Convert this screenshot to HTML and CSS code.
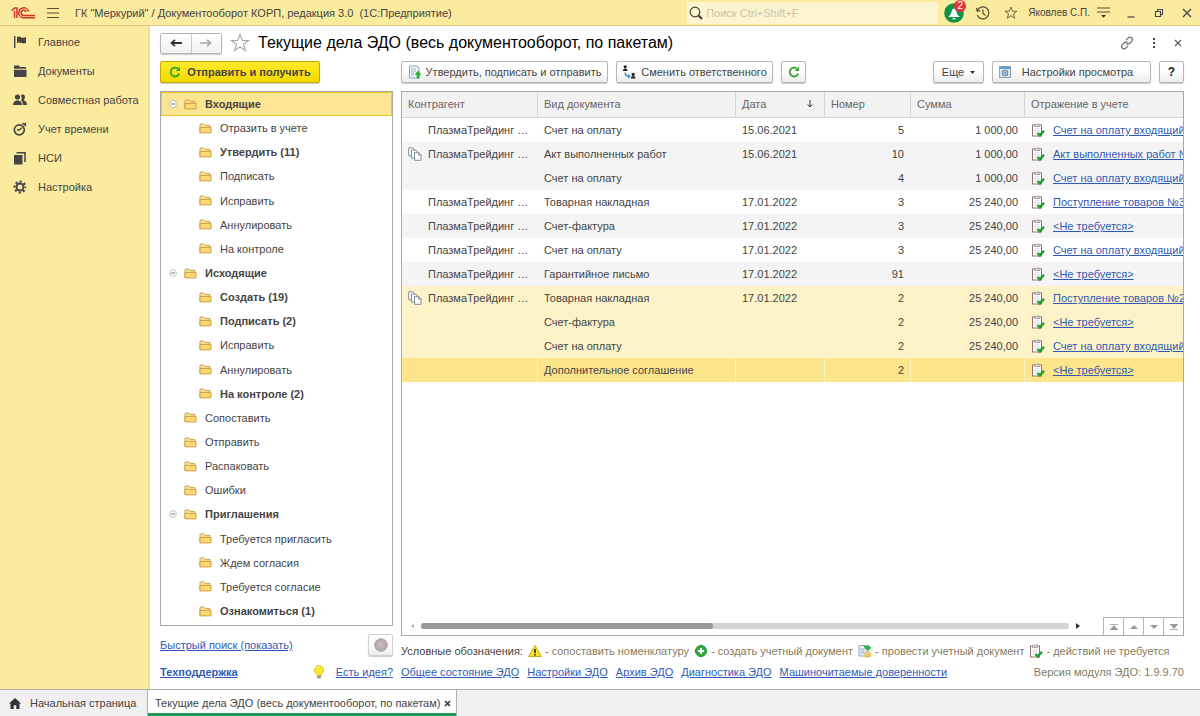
FILE: index.html
```html
<!DOCTYPE html>
<html lang="ru">

<head>
    <meta charset="UTF-8">
    <meta name="viewport" content="width=device-width, initial-scale=1.0">
    <title>Текущие дела ЭДО</title>

    <link rel="stylesheet" href="styles.css">
</head>

<body>
    <!-- общие иконки -->
    <svg class="sprite">
        <symbol id="i-folder" viewBox="0 0 14 12">
            <path d="M1 10.5V2.2Q1 1 2.2 1H5l1.4 1.6h5.4v2" fill="#fbe39a" stroke="#c79a3c" />
            <path d="M1 10.8V4.8h12v6z" fill="#fcd873" stroke="#c79a3c" stroke-linejoin="round" />
        </symbol>
        <symbol id="i-clip" viewBox="0 0 14 14">
            <rect x="1.5" y="2" width="9" height="11" fill="#fff" stroke="#9c6f6b" />
            <path d="M3.5 3.5V1.2h5v2.3z" fill="#d9d9dc" stroke="#999" stroke-width=".8" />
            <path d="M3.5 6h5M3.5 8h5M3.5 10h3" stroke="#c9ccd4" stroke-width=".8" />
            <path d="M6.5 10l2.3 2.4L13 7.8" fill="none" stroke="#1e9a2a" stroke-width="2.4" />
        </symbol>
        <symbol id="i-copies" viewBox="0 0 14 14">
            <g fill="#fff" stroke="#7f8d9b">
                <path d="M.8.8h4l2 2v6h-6z" />
                <path d="M3.6 3h4l2 2v6h-6z" />
                <path d="M6.5 5.3h4l2.5 2.5v5.5H6.5z" />
                <path d="M10.3 5.5v2.6H13" fill="none" />
            </g>
        </symbol>
        <symbol id="i-refresh" viewBox="0 0 12 12">
            <path d="M10.2 7.6A4.4 4.4 0 1 1 8.8 2.6" fill="none" stroke="#2ca52c" stroke-width="1.8" />
            <path d="M6.8 4.9L11 5V.8z" fill="#2ca52c" />
        </symbol>
        <symbol id="i-star" viewBox="0 0 20 20">
            <path d="M10 1.5l2.3 6h6.2l-5 3.8 1.9 6.2-5.4-3.7-5.4 3.7 1.9-6.2-5-3.8h6.2z" fill="none" stroke="currentColor" stroke-width="1.2" />
        </symbol>
        <symbol id="i-minus" viewBox="0 0 8 8">
            <circle cx="4" cy="4" r="3.4" fill="#fff" stroke="#b3b3b3" stroke-width=".8" />
            <path d="M2 4h4" stroke="#777" />
        </symbol>
    </svg>

    <header class="topbar">
        <svg class="logo" viewBox="0 0 26 14">
            <g fill="none" stroke="#d8332b" stroke-width="1.6">
                <path d="M.8 4.6L3.8 1.7h2.4V12.3M3.7 4.8V12.3" />
                <path d="M18.2 5.4A5.2 5.2 0 1 0 13.2 12H25" />
                <path d="M15.7 5.9A2.7 2.7 0 1 0 13.2 9.5H25" />
            </g>
        </svg>
        <button class="icon-btn" aria-label="Меню">
            <svg width="12" height="12" viewBox="0 0 12 12">
                <path d="M0 1.5h12M0 6h12M0 10.5h12" stroke="#55502f" stroke-width="1.1" />
            </svg>
        </button>
        <span class="app-title">ГК "Меркурий" / Документооборот КОРП, редакция 3.0&nbsp; (1С:Предприятие)</span>
        <label class="search">
            <svg width="14" height="14" viewBox="0 0 14 14">
                <circle cx="6" cy="6" r="4.8" fill="none" stroke="#444" stroke-width="1.2" />
                <path d="M9.5 9.5L13 13" stroke="#333" stroke-width="1.8" />
            </svg>
            <input type="text" placeholder="Поиск Ctrl+Shift+F" aria-label="Поиск">
        </label>
        <button class="icon-btn bell" aria-label="Уведомления">
            <svg width="20" height="20" viewBox="0 0 20 20">
                <circle cx="10" cy="10" r="9.8" fill="#0f9347" />
                <path d="M4 14q3-1.5 3.5-5 .6-3.500 2.500-3.500t2.500 3.500q.5 3.500 3.500 5z" fill="#fff" />
                <path d="M8.200 15h3.600q-.5 1.500-1.800 1.500T8.200 15z" fill="#fff" />
            </svg>
            <span class="count">2</span>
        </button>
        <button class="icon-btn history" aria-label="История">
            <svg width="14" height="14" viewBox="0 0 14 14">
                <path d="M1.2 4.8A6 6 0 1 1 1.2 9" fill="none" stroke="#55502f" stroke-width="1.2" />
                <path d="M.5 2l.7 3.2 3-.5M7 3.500V7.500l2.500 2" fill="none" stroke="#55502f" stroke-width="1.2" />
            </svg>
        </button>
        <button class="icon-btn fav" aria-label="Избранное"><svg width="14" height="14"><use href="#i-star" /></svg></button>
        <a class="user" href="#">Яковлев С.П.</a>
        <button class="icon-btn service" aria-label="Сервис">
            <svg width="13" height="11" viewBox="0 0 13 11">
                <path d="M0 1h13M0 5h13" stroke="#55502f" stroke-width="1.2" />
                <path d="M4 8h5l-2.500 2.800z" fill="#33301c" />
            </svg>
        </button>
        <div class="win-btns">
            <button class="icon-btn" aria-label="Свернуть">
                <svg width="10" height="10" viewBox="0 0 10 10"><path d="M1.5 9h7" stroke="#444" stroke-width="1.2" /></svg>
            </button>
            <button class="icon-btn" aria-label="Развернуть">
                <svg width="10" height="10" viewBox="0 0 10 10">
                    <path d="M1.5 3.5h5v5h-5zM3.5 3.500v-2h5v5h-2" fill="none" stroke="#444" stroke-width="1.1" />
                </svg>
            </button>
            <button class="icon-btn" aria-label="Закрыть">
                <svg width="10" height="10" viewBox="0 0 10 10"><path d="M1 1l8 8M9 1L1 9" stroke="#444" stroke-width="1.2" /></svg>
            </button>
        </div>
    </header>

    <div class="main">
        <nav class="sidebar">
            <a href="#">
                <svg viewBox="0 0 14 14" fill="#454545">
                    <path d="M1 1h1.400v12H1zM4 2q2-.9 4 .2t5-.2v6q-2 .9-4.500 0T4 8z" />
                </svg>Главное</a>
            <a href="#">
                <svg viewBox="0 0 14 14" fill="#454545">
                    <path d="M1 1.500h5l1 1.500h6v1.800H1zM1 5.800h12.500V13H1z" />
                </svg>Документы</a>
            <a href="#">
                <svg viewBox="0 0 14 14" fill="#454545">
                    <circle cx="4.500" cy="4" r="2.600" />
                    <path d="M0 12q0-3.500 3.200-4.500h2.500Q9 8.500 9 12zM8 1.800q3.500-1 4 1.700 0 2-1 3.200.3 1 1.500 1.500 1.500.8 1.500 3.800h-4q0-3-1.800-4.500l.6-1.500z" />
                </svg>Совместная работа</a>
            <a href="#">
                <svg viewBox="0 0 14 14" fill="none" stroke="#454545">
                    <circle cx="6.300" cy="7.800" r="5" stroke-width="1.700" />
                    <path d="M6.300 8l3-2.500M6.300 8H4" stroke-width="1.300" />
                    <path d="M9.500 1.200l3.500 2.600M12.800 1l-1.600 2" stroke-width="1.600" />
                </svg>Учет времени</a>
            <a href="#">
                <svg viewBox="0 0 14 14" fill="#454545">
                    <path d="M1 4h8.500v9.500H1z" />
                    <path d="M3.500 1.800h8.500V11" fill="none" stroke="#454545" stroke-width="1.500" />
                </svg>НСИ</a>
            <a href="#">
                <svg viewBox="0 0 14 14" fill="none" stroke="#454545">
                    <circle cx="7" cy="7" r="3.500" stroke-width="2" />
                    <circle cx="7" cy="7" r="5.500" stroke-width="2" stroke-dasharray="2.160" stroke-dashoffset="1.080" />
                </svg>Настройка</a>
        </nav>

        <main class="content">
            <div class="page-head">
                <div class="nav-btns">
                    <button aria-label="Назад">
                        <svg width="12" height="8" viewBox="0 0 12 8"><path d="M12 4H2M5 .8L1.500 4 5 7.200" fill="none" stroke="#333" stroke-width="1.800" /></svg>
                    </button>
                    <button aria-label="Вперед">
                        <svg width="12" height="8" viewBox="0 0 12 8"><path d="M0 4h10M7 .8L10.500 4 7 7.200" fill="none" stroke="#aaa" stroke-width="1.600" /></svg>
                    </button>
                </div>
                <svg class="title-star"><use href="#i-star" /></svg>
                <h1>Текущие дела ЭДО (весь документооборот, по пакетам)</h1>
                <div class="page-tools">
                    <button class="icon-btn" aria-label="Ссылка">
                        <svg width="14" height="14" viewBox="0 0 14 14">
                            <g fill="none" stroke="#666" stroke-width="1.200">
                                <path d="M6 4.200L8.500 1.700q1.700-1.400 3.200.2t.2 3.200L9.500 7.500q-1.600 1.300-3 0" />
                                <path d="M8 9.800l-2.500 2.500q-1.700 1.400-3.200-.2t-.2-3.200L4.500 6.500q1.600-1.300 3 0" />
                            </g>
                        </svg>
                    </button>
                    <button class="icon-btn" aria-label="Еще действия">
                        <svg width="4" height="10" viewBox="0 0 4 10" fill="#444">
                            <path d="M1 0h2v2H1zM1 4h2v2H1zM1 8h2v2H1z" />
                        </svg>
                    </button>
                    <button class="icon-btn" aria-label="Закрыть форму">
                        <svg width="8" height="8" viewBox="0 0 8 8"><path d="M1 1l6 6M7 1L1 7" stroke="#555" stroke-width="1.100" /></svg>
                    </button>
                </div>
            </div>

            <div class="workspace">
                <section class="left">
                    <div class="toolbar">
                        <button class="btn primary"><svg width="12" height="12"><use href="#i-refresh" /></svg>Отправить и получить</button>
                    </div>

                    <ul class="tree">
                        <li class="group active"><svg class="toggle"><use href="#i-minus" /></svg><svg class="folder"><use href="#i-folder" /></svg>Входящие</li>
                        <li class="sub"><svg class="folder"><use href="#i-folder" /></svg>Отразить в учете</li>
                        <li class="sub bold"><svg class="folder"><use href="#i-folder" /></svg>Утвердить (11)</li>
                        <li class="sub"><svg class="folder"><use href="#i-folder" /></svg>Подписать</li>
                        <li class="sub"><svg class="folder"><use href="#i-folder" /></svg>Исправить</li>
                        <li class="sub"><svg class="folder"><use href="#i-folder" /></svg>Аннулировать</li>
                        <li class="sub"><svg class="folder"><use href="#i-folder" /></svg>На контроле</li>
                        <li class="group"><svg class="toggle"><use href="#i-minus" /></svg><svg class="folder"><use href="#i-folder" /></svg>Исходящие</li>
                        <li class="sub bold"><svg class="folder"><use href="#i-folder" /></svg>Создать (19)</li>
                        <li class="sub bold"><svg class="folder"><use href="#i-folder" /></svg>Подписать (2)</li>
                        <li class="sub"><svg class="folder"><use href="#i-folder" /></svg>Исправить</li>
                        <li class="sub"><svg class="folder"><use href="#i-folder" /></svg>Аннулировать</li>
                        <li class="sub bold"><svg class="folder"><use href="#i-folder" /></svg>На контроле (2)</li>
                        <li class="item"><svg class="folder"><use href="#i-folder" /></svg>Сопоставить</li>
                        <li class="item"><svg class="folder"><use href="#i-folder" /></svg>Отправить</li>
                        <li class="item"><svg class="folder"><use href="#i-folder" /></svg>Распаковать</li>
                        <li class="item"><svg class="folder"><use href="#i-folder" /></svg>Ошибки</li>
                        <li class="group"><svg class="toggle"><use href="#i-minus" /></svg><svg class="folder"><use href="#i-folder" /></svg>Приглашения</li>
                        <li class="sub"><svg class="folder"><use href="#i-folder" /></svg>Требуется пригласить</li>
                        <li class="sub"><svg class="folder"><use href="#i-folder" /></svg>Ждем согласия</li>
                        <li class="sub"><svg class="folder"><use href="#i-folder" /></svg>Требуется согласие</li>
                        <li class="sub bold"><svg class="folder"><use href="#i-folder" /></svg>Ознакомиться (1)</li>
                    </ul>

                    <div class="quick">
                        <a href="#">Быстрый поиск (показать)</a>
                        <button class="btn round" aria-label="Очистить">
                            <svg width="14" height="14" viewBox="0 0 14 14">
                                <circle cx="7" cy="7" r="6.300" fill="#bcaeae" stroke="#a9a0a0" />
                                <path d="M4.800 4.800l4.400 4.400M9.200 4.800L4.800 9.200" stroke="#cbbfbf" stroke-width="1.500" />
                            </svg>
                        </button>
                    </div>
                    <div class="support">
                        <a class="bold" href="#">Техподдержка</a>
                        <svg width="12" height="14" viewBox="0 0 12 14">
                            <path d="M6 .5a4.600 4.600 0 0 1 2.700 8.300L8 10.500H4L3.300 8.800A4.600 4.600 0 0 1 6 .5z" fill="#fbe82a" stroke="#d8b920" stroke-width=".8" />
                            <path d="M4 3.500q.8-1.300 2.200-1.300" stroke="#fff" fill="none" />
                            <path d="M4 10.700h4v1.800l-1 1H5l-1-1z" fill="#999" />
                        </svg>
                        <a href="#">Есть идея?</a>
                    </div>
                </section>

                <section class="right">
                    <div class="toolbar">
                        <button class="btn approve">
                            <svg width="14" height="14" viewBox="0 0 14 14">
                                <path d="M1.500 1h7.500l2 2v10H1.500z" fill="#f3f7fb" stroke="#8ba0b5" />
                                <path d="M3 4h5M3 6h5M3 8h3M3 10h3" stroke="#9fb3c8" />
                                <path d="M8.600 13.500V9.800H6.500L10 5.800l3.600 4h-2.200v3.700z" fill="#2cb52f" />
                            </svg>Утвердить, подписать и отправить</button>
                        <button class="btn change">
                            <svg width="14" height="14" viewBox="0 0 14 14">
                                <circle cx="3.200" cy="1.800" r="1.600" fill="#222" />
                                <path d="M.8 6q0-2.500 2.400-2.500T5.600 6zM8.800 13.500q0-2.500 2.400-2.500t2.400 2.500z" fill="#222" />
                                <circle cx="11.200" cy="9.400" r="1.600" fill="#222" />
                                <path d="M3.200 7.500q0 3.800 4 4" fill="none" stroke="#3f8fd8" stroke-width="1.500" />
                                <path d="M6 9l3 2.500-3 2z" fill="#3f8fd8" />
                            </svg>Сменить ответственного</button>
                        <button class="btn round" aria-label="Обновить"><svg width="12" height="12"><use href="#i-refresh" /></svg></button>
                        <div class="spacer"></div>
                        <button class="btn more">Еще
                            <svg width="5" height="3" viewBox="0 0 5 3"><path d="M0 0h5L2.500 3z" fill="#333" /></svg>
                        </button>
                        <button class="btn view">
                            <svg width="12" height="12" viewBox="0 0 12 12">
                                <rect x=".5" y=".5" width="11" height="11" fill="#dfe9f2" stroke="#8aa0b5" />
                                <path d="M1 1h10v2H1z" fill="#5a9bd5" />
                                <circle cx="6" cy="7" r="2.600" fill="none" stroke="#6f88a3" stroke-width="1.400" />
                                <circle cx="6" cy="7" r="1" fill="#4f86bd" />
                            </svg>
                            <span>Настройки просмотра</span></button>
                        <button class="btn help">?</button>
                    </div>

                    <div class="grid-box">
                        <table>
                            <colgroup>
                                <col class="c-org">
                                <col class="c-kind">
                                <col class="c-date">
                                <col class="c-num">
                                <col class="c-sum">
                                <col>
                            </colgroup>
                            <thead>
                                <tr>
                                    <th>Контрагент</th>
                                    <th>Вид документа</th>
                                    <th><div class="sorted">Дата
                                        <svg width="6" height="8" viewBox="0 0 6 8"><path d="M3 0v6.500M.8 4.500L3 7l2.200-2.500" fill="none" stroke="#333" /></svg></div></th>
                                    <th>Номер</th>
                                    <th>Сумма</th>
                                    <th>Отражение в учете</th>
                                </tr>
                            </thead>
                            <tbody>
                                <tr>
                                    <td class="org">ПлазмаТрейдинг …</td>
                                    <td>Счет на оплату</td>
                                    <td>15.06.2021</td>
                                    <td class="num">5</td>
                                    <td class="num">1 000,00</td>
                                    <td><svg class="clip"><use href="#i-clip" /></svg><a href="#">Счет на оплату входящий</a></td>
                                </tr>
                                <tr class="even">
                                    <td class="org"><svg class="copies"><use href="#i-copies" /></svg>ПлазмаТрейдинг …</td>
                                    <td>Акт выполненных работ</td>
                                    <td>15.06.2021</td>
                                    <td class="num">10</td>
                                    <td class="num">1 000,00</td>
                                    <td><svg class="clip"><use href="#i-clip" /></svg><a href="#">Акт выполненных работ №</a></td>
                                </tr>
                                <tr class="even">
                                    <td></td>
                                    <td>Счет на оплату</td>
                                    <td></td>
                                    <td class="num">4</td>
                                    <td class="num">1 000,00</td>
                                    <td><svg class="clip"><use href="#i-clip" /></svg><a href="#">Счет на оплату входящий</a></td>
                                </tr>
                                <tr>
                                    <td class="org">ПлазмаТрейдинг …</td>
                                    <td>Товарная накладная</td>
                                    <td>17.01.2022</td>
                                    <td class="num">3</td>
                                    <td class="num">25 240,00</td>
                                    <td><svg class="clip"><use href="#i-clip" /></svg><a href="#">Поступление товаров №3</a></td>
                                </tr>
                                <tr class="even">
                                    <td class="org">ПлазмаТрейдинг …</td>
                                    <td>Счет-фактура</td>
                                    <td>17.01.2022</td>
                                    <td class="num">3</td>
                                    <td class="num">25 240,00</td>
                                    <td><svg class="clip"><use href="#i-clip" /></svg><a href="#">&lt;Не требуется&gt;</a></td>
                                </tr>
                                <tr>
                                    <td class="org">ПлазмаТрейдинг …</td>
                                    <td>Счет на оплату</td>
                                    <td>17.01.2022</td>
                                    <td class="num">3</td>
                                    <td class="num">25 240,00</td>
                                    <td><svg class="clip"><use href="#i-clip" /></svg><a href="#">Счет на оплату входящий</a></td>
                                </tr>
                                <tr class="even">
                                    <td class="org">ПлазмаТрейдинг …</td>
                                    <td>Гарантийное письмо</td>
                                    <td>17.01.2022</td>
                                    <td class="num">91</td>
                                    <td></td>
                                    <td><svg class="clip"><use href="#i-clip" /></svg><a href="#">&lt;Не требуется&gt;</a></td>
                                </tr>
                                <tr class="pack">
                                    <td class="org"><svg class="copies"><use href="#i-copies" /></svg>ПлазмаТрейдинг …</td>
                                    <td>Товарная накладная</td>
                                    <td>17.01.2022</td>
                                    <td class="num">2</td>
                                    <td class="num">25 240,00</td>
                                    <td><svg class="clip"><use href="#i-clip" /></svg><a href="#">Поступление товаров №2</a></td>
                                </tr>
                                <tr class="pack">
                                    <td></td>
                                    <td>Счет-фактура</td>
                                    <td></td>
                                    <td class="num">2</td>
                                    <td class="num">25 240,00</td>
                                    <td><svg class="clip"><use href="#i-clip" /></svg><a href="#">&lt;Не требуется&gt;</a></td>
                                </tr>
                                <tr class="pack">
                                    <td></td>
                                    <td>Счет на оплату</td>
                                    <td></td>
                                    <td class="num">2</td>
                                    <td class="num">25 240,00</td>
                                    <td><svg class="clip"><use href="#i-clip" /></svg><a href="#">Счет на оплату входящий</a></td>
                                </tr>
                                <tr class="current">
                                    <td></td>
                                    <td>Дополнительное соглашение</td>
                                    <td></td>
                                    <td class="num">2</td>
                                    <td></td>
                                    <td><svg class="clip"><use href="#i-clip" /></svg><a href="#">&lt;Не требуется&gt;</a></td>
                                </tr>
                            </tbody>
                        </table>

                        <div class="scroll-row">
                            <svg width="4" height="6" viewBox="0 0 4 6"><path d="M4 1v4L1 3z" fill="#aaa" /></svg>
                            <div class="track"><div class="thumb"></div></div>
                            <svg width="4" height="6" viewBox="0 0 4 6"><path d="M0 0v6l4-3z" fill="#333" /></svg>
                            <div class="pager">
                                <button aria-label="В начало"><svg width="8" height="6" viewBox="0 0 8 6"><path d="M0 .5h8M0 6h8L4 1.500z" stroke="#999" fill="#999" stroke-width=".8" /></svg></button>
                                <button aria-label="Вверх"><svg width="8" height="6" viewBox="0 0 8 6"><path d="M0 5h8L4 1z" fill="#999" /></svg></button>
                                <button aria-label="Вниз"><svg width="8" height="6" viewBox="0 0 8 6"><path d="M0 1h8L4 5z" fill="#999" /></svg></button>
                                <button aria-label="В конец"><svg width="8" height="6" viewBox="0 0 8 6"><path d="M0 5.500h8M0 0h8L4 4.500z" stroke="#999" fill="#999" stroke-width=".8" /></svg></button>
                            </div>
                        </div>
                    </div>

                    <div class="legend">
                        <span class="legend-title">Условные обозначения:</span>
                        <span>
                            <svg viewBox="0 0 14 14">
                                <path d="M7 1.500L13.300 12.500H.7z" fill="#fbe02a" stroke="#c9a916" stroke-linejoin="round" />
                                <path d="M7 5v4M7 10v1.500" stroke="#222" stroke-width="1.600" />
                            </svg>- сопоставить номенклатуру</span>
                        <span>
                            <svg viewBox="0 0 14 14">
                                <circle cx="7" cy="7" r="5.500" fill="#31ad44" stroke="#1d8b30" />
                                <path d="M7 4v6M4 7h6" stroke="#fff" stroke-width="1.800" />
                            </svg>- создать учетный документ</span>
                        <span>
                            <svg viewBox="0 0 14 14">
                                <path d="M1 1.500h8.500v10.500H1z" fill="#eaf2f8" stroke="#8fa9bd" />
                                <path d="M2.500 5h4M2.500 7h4M2.500 9h4" stroke="#8fa9bd" />
                                <path d="M5.500 2h4V.5l4 3.300-4 3.400V5.500h-2z" fill="#2bb34a" />
                                <ellipse cx="9.800" cy="9.300" rx="3.200" ry="1.400" fill="#fbe08a" stroke="#d6a52c" stroke-width=".7" />
                                <ellipse cx="9.800" cy="11.800" rx="3.200" ry="1.400" fill="#f9cf5a" stroke="#d6a52c" stroke-width=".7" />
                            </svg>- провести учетный документ</span>
                        <span><svg><use href="#i-clip" /></svg>- действий не требуется</span>
                    </div>
                    <div class="links">
                        <a href="#">Общее состояние ЭДО</a>
                        <a href="#">Настройки ЭДО</a>
                        <a href="#">Архив ЭДО</a>
                        <a href="#">Диагностика ЭДО</a>
                        <a href="#">Машиночитаемые доверенности</a>
                        <span class="version">Версия модуля ЭДО: 1.9.9.70</span>
                    </div>
                </section>
            </div>
        </main>
    </div>

    <footer class="taskbar">
        <a class="home" href="#">
            <svg width="12" height="11" viewBox="0 0 12 11"><path d="M6 0l6 5.600h-1.500V11H7.300V7.200H4.700V11H1.500V5.600H0z" fill="#333" /></svg>Начальная страница</a>
        <div class="tab">
            <span>Текущие дела ЭДО (весь документооборот, по пакетам)</span>
            <button class="icon-btn" aria-label="Закрыть вкладку">
                <svg width="7" height="7" viewBox="0 0 7 7"><path d="M1 1l5 5M6 1L1 6" stroke="#333" stroke-width="1.500" /></svg>
            </button>
        </div>
    </footer>
</body>

</html>
```
FILE: styles.css
```css
* {
    box-sizing: border-box;
}

body {
    margin: 0;
    height: 100vh;
    display: flex;
    flex-direction: column;
    font-family: "Liberation Sans", Arial, sans-serif;
    font-size: 11px;
    color: #444;
    background-color: white;
    overflow: hidden;
}

svg {
    flex: none;
}

button {
    font-family: inherit;
    font-size: inherit;
    color: inherit;
    cursor: pointer;
}

a {
    color: #2f5bb5;
}

.sprite {
    display: none;
}

.bold {
    font-weight: bold;
}

.icon-btn {
    display: flex;
    padding: 0;
    border: 0;
    background: none;
}

/* верхняя панель */
.topbar {
    height: 26px;
    flex: none;
    display: flex;
    align-items: center;
    padding: 0 8px 0 11px;
    background-color: #fbeb9e;
    border-bottom: 1px solid #d9c98a;
}

.logo {
    width: 25px;
    height: 14px;
    margin-right: 11px;
}

.app-title {
    margin-left: 16px;
    flex: 1;
    white-space: nowrap;
}

.search {
    width: 251px;
    height: 22px;
    display: flex;
    align-items: center;
    gap: 3px;
    padding-left: 2px;
    background-color: #fdf5cf;
}

.search input {
    flex: 1;
    min-width: 0;
    padding: 0;
    border: 0;
    outline: 0;
    background: none;
    font-family: inherit;
    font-size: 11px;
}

.search input::placeholder {
    color: #c9c3a6;
}

.bell {
    position: relative;
    margin-left: 6px;
}

.count {
    position: absolute;
    top: -3px;
    right: -2px;
    width: 12px;
    height: 12px;
    border-radius: 50%;
    background-color: #e3343a;
    color: white;
    font-size: 10px;
    line-height: 12px;
    text-align: center;
}

.history {
    margin-left: 12px;
}

.fav {
    margin-left: 14px;
    color: #55502f;
}

.user {
    margin-left: 10px;
    font-size: 10px;
    color: #444;
    text-decoration: none;
}

.service {
    margin-left: 7px;
}

.win-btns {
    display: flex;
    gap: 18px;
    margin-left: 16px;
}

/* разделы */
.main {
    flex: 1;
    min-height: 0;
    display: flex;
}

.sidebar {
    width: 150px;
    flex: none;
    padding-top: 1px;
    background-color: #fbeb9e;
    border-right: 2px solid #efdd8c;
}

.sidebar a {
    height: 29px;
    display: flex;
    align-items: center;
    gap: 11px;
    padding-left: 13px;
    color: #444;
    text-decoration: none;
}

.sidebar svg {
    width: 14px;
    height: 14px;
}

.content {
    flex: 1;
    min-width: 0;
    display: flex;
    flex-direction: column;
    padding: 6px 16px 7px 10px;
}

.page-head {
    display: flex;
    align-items: center;
    height: 22px;
}

.nav-btns {
    display: flex;
    width: 62px;
    height: 21px;
    border: 1px solid #b5b5b5;
    border-radius: 2px;
    box-shadow: 0 1px 1px #ccc;
}

.nav-btns button {
    flex: 1;
    display: flex;
    align-items: center;
    justify-content: center;
    padding: 0;
    border: 0;
    background: linear-gradient(white, #f1f1f1);
}

.nav-btns button + button {
    border-left: 1px solid #ccc;
}

.title-star {
    width: 20px;
    height: 20px;
    margin: 0 8px;
    color: #aaa;
}

h1 {
    flex: 1;
    margin: 0;
    font-size: 16px;
    font-weight: normal;
    color: #000;
    white-space: nowrap;
}

.page-tools {
    display: flex;
    align-items: center;
    gap: 18px;
    padding-right: 2px;
}

.workspace {
    flex: 1;
    min-height: 0;
    display: flex;
    gap: 8px;
    margin-top: 7px;
}

.left {
    width: 233px;
    flex: none;
    display: flex;
    flex-direction: column;
}

.right {
    flex: 1;
    min-width: 0;
    display: flex;
    flex-direction: column;
}

.toolbar {
    display: flex;
    gap: 8px;
    margin-bottom: 8px;
}

.spacer {
    flex: 1;
}

.btn {
    height: 22px;
    display: flex;
    align-items: center;
    justify-content: center;
    padding: 0 6px;
    border: 1px solid #b5b5b5;
    border-radius: 2px;
    background: linear-gradient(white 40%, #ececec);
    box-shadow: 0 1px 1px #ccc;
    white-space: nowrap;
}

.btn:hover {
    filter: brightness(95%);
}

.primary {
    width: 160px;
    gap: 6px;
    border-color: #c3a900;
    background: linear-gradient(#ffe92a, #f3d900);
    font-weight: bold;
}

.approve {
    width: 207px;
    gap: 4px;
}

.change {
    width: 157px;
    gap: 5px;
}

.round {
    width: 25px;
    padding: 0;
}

.more {
    width: 51px;
    gap: 6px;
}

.view {
    width: 159px;
}

.view span {
    flex: 1;
}

.help {
    width: 25px;
    font-size: 12px;
    font-weight: bold;
    color: #222;
}

/* дерево папок */
.tree {
    flex: 1;
    min-height: 0;
    display: flex;
    flex-direction: column;
    margin: 0;
    padding: 0 0 2px;
    list-style: none;
    border: 1px solid #a9a9a9;
}

.tree li {
    flex: 1 1 0;
    min-height: 0;
    display: flex;
    align-items: center;
    cursor: pointer;
}

.tree .group {
    padding-left: 8px;
    font-weight: bold;
}

.tree .item {
    padding-left: 23px;
}

.tree .sub {
    padding-left: 38px;
}

.tree .active {
    box-shadow: inset 0 0 0 1px #ecc42c;
    background-color: #fde592;
}

.toggle {
    width: 8px;
    height: 8px;
    margin-right: 7px;
}

.folder {
    width: 13px;
    height: 11px;
    margin-right: 8px;
}

.quick {
    height: 24px;
    display: flex;
    align-items: center;
    justify-content: space-between;
    margin: 7px 0 5px;
}

.quick .btn {
    border-color: #d0d0d0;
}

.support {
    height: 20px;
    display: flex;
    align-items: center;
}

.support svg {
    margin: 0 11px 0 auto;
}

/* список документов */
.grid-box {
    flex: 1;
    min-height: 0;
    display: flex;
    flex-direction: column;
    justify-content: space-between;
    border: 1px solid #a9a9a9;
    overflow: hidden;
}

table {
    width: 100%;
    table-layout: fixed;
    border-spacing: 0;
}

.c-org {
    width: 136px;
}

.c-kind {
    width: 198px;
}

.c-date {
    width: 89px;
}

.c-num {
    width: 86px;
}

.c-sum {
    width: 114px;
}

th {
    height: 26px;
    padding: 0 6px 1px;
    text-align: left;
    font-weight: normal;
    color: #666;
    background-color: #f2f2f2;
    border-right: 1px solid #d4d4d4;
    border-bottom: 1px solid #d4d4d4;
}

th:last-child {
    border-right: 0;
}

.sorted {
    display: flex;
    align-items: center;
    justify-content: space-between;
    padding-right: 5px;
}

td {
    height: 24px;
    padding: 0 7px 0 6px;
    white-space: nowrap;
    overflow: hidden;
}

td:last-child {
    padding-right: 0;
}

.org {
    padding-left: 26px;
}

.num {
    text-align: right;
}

.copies,
.clip {
    width: 14px;
    height: 14px;
    margin: -2px 0;
    vertical-align: -1px;
}

.copies {
    margin-right: 6px;
    margin-left: -20px;
}

.clip {
    margin-right: 8px;
}

.even {
    background-color: #f4f4f4;
}

.pack {
    background-color: #fdf3c8;
}

.current {
    background-color: #fde58c;
}

.current td:not(:last-child) {
    border-right: 1px solid #fdf3c8;
}

.current .num {
    padding-right: 6px;
}

.scroll-row {
    display: flex;
    align-items: center;
    gap: 7px;
    padding-left: 8px;
}

.track {
    flex: 1;
    height: 6px;
    border-radius: 3px;
    background-color: #d3d3d3;
}

.thumb {
    width: 45%;
    height: 6px;
    border-radius: 3px;
    background-color: #999;
}

.pager {
    display: flex;
    margin-left: 16px;
    border-top: 1px solid #b5b5b5;
}

.pager button {
    width: 20px;
    height: 17px;
    display: flex;
    align-items: center;
    justify-content: center;
    padding: 0;
    border: 0;
    border-left: 1px solid #b5b5b5;
    background: none;
}

.legend {
    height: 20px;
    display: flex;
    align-items: center;
    gap: 5px;
    margin: 5px 0 1px;
    color: #857c60;
    white-space: nowrap;
}

.legend span {
    display: flex;
    align-items: center;
    gap: 3px;
}

.legend svg {
    width: 14px;
    height: 14px;
}

.legend-title {
    color: #444;
}

.links {
    height: 20px;
    display: flex;
    align-items: center;
    gap: 8px;
    white-space: nowrap;
}

.version {
    margin-left: auto;
    color: #857c60;
}

/* панель открытых окон */
.taskbar {
    height: 27px;
    flex: none;
    display: flex;
    background-color: #f0f0f0;
    border-top: 1px solid #b0b0b0;
}

.home {
    width: 147px;
    display: flex;
    align-items: center;
    gap: 9px;
    padding-left: 9px;
    color: #444;
    text-decoration: none;
}

.tab {
    display: flex;
    align-items: center;
    gap: 4px;
    padding: 0 5px 0 7px;
    background-color: white;
    border: solid #b0b0b0;
    border-width: 0 1px;
    box-shadow: inset 0 -3px #1f9a55;
    white-space: nowrap;
}
```
